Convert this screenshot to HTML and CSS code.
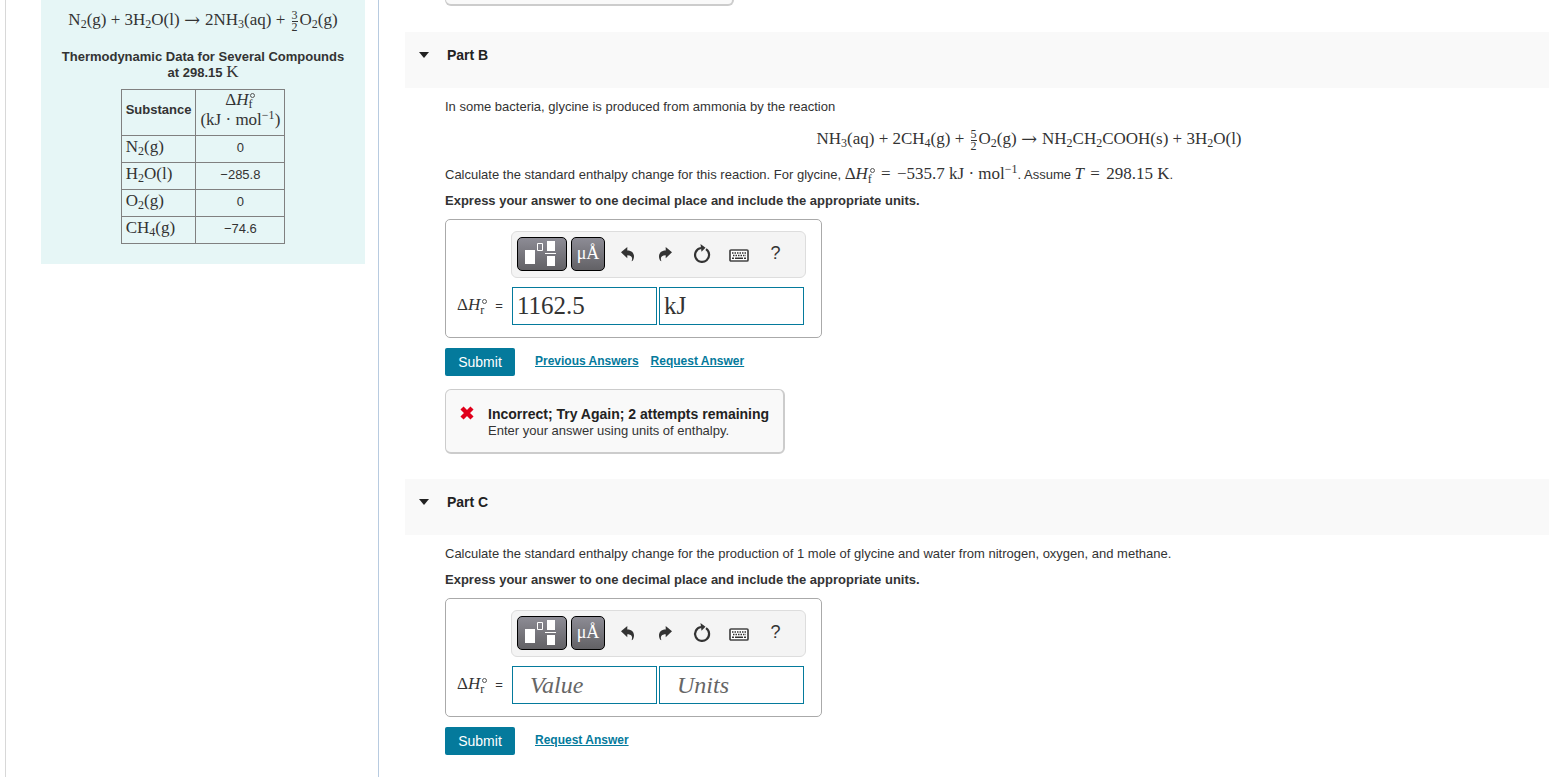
FILE: index.html
```html
<!DOCTYPE html>
<html lang="en">
<head>
<meta charset="utf-8">
<title>Standard Enthalpy of Reaction</title>
<link rel="stylesheet" href="styles.css">
</head>
<body>
<svg class="symbols" aria-hidden="true">
  <symbol id="i-template" viewBox="0 0 34 26">
    <path fill="#fff" d="M0 9h10v14H0zM22 0h8v10h-8zM22 15h8v10h-8zM20 12h11v1H20z"/>
    <path fill="none" stroke="#fff" d="M12.500 2.500h5v7h-5z"/>
  </symbol>
  <symbol id="i-undo" viewBox="0 0 16 16">
    <path fill="#333" d="M1 6.300 7.300 1v3.400c4.500 0 6.700 2.600 6.700 6 0 1.900-.6 3.400-1.700 4.600-.4.300-.7.100-.5-.4 1-3.300-.4-5.200-4.500-5.300v3z"/>
  </symbol>
  <symbol id="i-redo" viewBox="0 0 16 16">
    <path fill="#333" d="M15 6.300 8.700 1v3.400C4.200 4.400 2 7 2 10.400c0 1.900.6 3.400 1.700 4.600.4.300.7.100.5-.4-1-3.300.4-5.200 4.500-5.300v3z"/>
  </symbol>
  <symbol id="i-reset" viewBox="0 0 18 20">
    <path fill="none" stroke="#333" stroke-width="2.200" d="M13 5.100A7 7 0 1 1 8 4"/>
    <path fill="#333" d="M7.500 0l5 3.800-4 4z"/>
  </symbol>
  <symbol id="i-keyboard" viewBox="0 0 20 14">
    <rect x="1" y="1" width="18" height="11" rx="1" fill="#fff" stroke="#444" stroke-width="1.700"/>
    <path stroke="#333" stroke-width="1.500" stroke-dasharray="1.500 1" d="M3 4h14M4 6.500h13"/>
    <path stroke="#333" stroke-width="1.500" d="M3 9.300h2M6 9.300h8M15 9.300h2"/>
  </symbol>
  <symbol id="i-cross" viewBox="0 0 14 14">
    <path stroke="#e0001b" stroke-width="4.400" d="M2 2l10 10M12 2 2 12"/>
  </symbol>
</svg>

<div class="page">
  <aside class="sidebar">
    <section class="intro">
      <div class="math intro-equation">N<sub>2</sub>(g) + 3H<sub>2</sub>O(l) <span class="arrow">→</span> 2NH<sub>3</sub>(aq) + <span class="frac"><span>3</span><span>2</span></span>O<sub>2</sub>(g)</div>
      <h2 class="table-title">Thermodynamic Data for Several Compounds<br>at 298.15 <span class="math">K</span></h2>
      <table class="data">
        <thead>
          <tr><th scope="col">Substance</th><th scope="col" class="math">Δ<i>H</i><span class="scripts"><span class="degree"></span><span>f</span></span><br>(kJ · mol<sup>−1</sup>)</th></tr>
        </thead>
        <tbody>
          <tr><th scope="row" class="math">N<sub>2</sub>(g)</th><td>0</td></tr>
          <tr><th scope="row" class="math">H<sub>2</sub>O(l)</th><td>−285.8</td></tr>
          <tr><th scope="row" class="math">O<sub>2</sub>(g)</th><td>0</td></tr>
          <tr><th scope="row" class="math">CH<sub>4</sub>(g)</th><td>−74.6</td></tr>
        </tbody>
      </table>
    </section>
  </aside>

  <main class="main">
    <div class="feedback feedback-tail"></div>

    <section class="part">
      <header class="part-header"><button class="toggle" type="button" aria-label="Collapse Part B"></button><h2>Part B</h2></header>
      <div class="part-body">
        <p>In some bacteria, glycine is produced from ammonia by the reaction</p>
        <div class="math equation">NH<sub>3</sub>(aq) + 2CH<sub>4</sub>(g) + <span class="frac"><span>5</span><span>2</span></span>O<sub>2</sub>(g) <span class="arrow">→</span> NH<sub>2</sub>CH<sub>2</sub>COOH(s) + 3H<sub>2</sub>O(l)</div>
        <p>Calculate the standard enthalpy change for this reaction. For glycine, <span class="math">Δ<i>H</i><span class="scripts"><span class="degree"></span><span>f</span></span> <span class="rel">=</span> −535.7 kJ · mol<sup>−1</sup></span>. Assume <span class="math"><i>T</i> <span class="rel">=</span> 298.15 K</span>.</p>
        <p class="instruction">Express your answer to one decimal place and include the appropriate units.</p>
        <form class="answer">
          <div class="toolbar">
            <button class="tool dark wide" type="button" aria-label="Templates"><svg width="34" height="26"><use href="#i-template"/></svg></button>
            <button class="tool dark" type="button" aria-label="Symbols">μÅ</button>
            <button class="tool" type="button" aria-label="Undo"><svg width="16" height="16"><use href="#i-undo"/></svg></button>
            <button class="tool" type="button" aria-label="Redo"><svg width="16" height="16"><use href="#i-redo"/></svg></button>
            <button class="tool" type="button" aria-label="Reset"><svg width="18" height="20"><use href="#i-reset"/></svg></button>
            <button class="tool low" type="button" aria-label="Keyboard shortcuts"><svg width="20" height="14"><use href="#i-keyboard"/></svg></button>
            <button class="tool" type="button" aria-label="Help">?</button>
          </div>
          <label class="answer-label" for="b-value"><span class="math">Δ<i>H</i><span class="scripts"><span class="degree"></span><span>r</span></span></span> =</label>
          <div class="fields">
            <input id="b-value" type="text" value="1162.5">
            <input type="text" value="kJ" aria-label="Units">
          </div>
        </form>
        <div class="actions"><button class="submit" type="submit">Submit</button><a href="#">Previous Answers</a><a href="#">Request Answer</a></div>
        <div class="feedback" role="status">
          <svg width="14" height="14"><use href="#i-cross"/></svg>
          <div><strong>Incorrect; Try Again; 2 attempts remaining</strong><div>Enter your answer using units of enthalpy.</div></div>
        </div>
      </div>
    </section>

    <section class="part">
      <header class="part-header"><button class="toggle" type="button" aria-label="Collapse Part C"></button><h2>Part C</h2></header>
      <div class="part-body">
        <p>Calculate the standard enthalpy change for the production of 1 mole of glycine and water from nitrogen, oxygen, and methane.</p>
        <p class="instruction">Express your answer to one decimal place and include the appropriate units.</p>
        <form class="answer">
          <div class="toolbar">
            <button class="tool dark wide" type="button" aria-label="Templates"><svg width="34" height="26"><use href="#i-template"/></svg></button>
            <button class="tool dark" type="button" aria-label="Symbols">μÅ</button>
            <button class="tool" type="button" aria-label="Undo"><svg width="16" height="16"><use href="#i-undo"/></svg></button>
            <button class="tool" type="button" aria-label="Redo"><svg width="16" height="16"><use href="#i-redo"/></svg></button>
            <button class="tool" type="button" aria-label="Reset"><svg width="18" height="20"><use href="#i-reset"/></svg></button>
            <button class="tool low" type="button" aria-label="Keyboard shortcuts"><svg width="20" height="14"><use href="#i-keyboard"/></svg></button>
            <button class="tool" type="button" aria-label="Help">?</button>
          </div>
          <label class="answer-label" for="c-value"><span class="math">Δ<i>H</i><span class="scripts"><span class="degree"></span><span>r</span></span></span> =</label>
          <div class="fields">
            <input id="c-value" type="text" placeholder="Value">
            <input type="text" placeholder="Units" aria-label="Units">
          </div>
        </form>
        <div class="actions"><button class="submit" type="submit">Submit</button><a href="#">Request Answer</a></div>
      </div>
    </section>
  </main>
</div>
</body>
</html>
```

FILE: styles.css
```css
* { box-sizing: border-box; }
body {
  margin: 0;
  background: #fff;
  color: #333;
  font: 13px/16px "Liberation Sans", Arial, sans-serif;
}
h2, p { margin: 0; }
button { font-family: inherit; cursor: pointer; }
.symbols { display: none; }

.page { display: flex; min-height: 100vh; }
.sidebar {
  flex: none;
  width: 374px;
  margin-left: 5px;
  padding: 0 13px 0 35px;
  border-left: 1px solid #d8d8d8;
  border-right: 1px solid #b8cbe0;
}
.main { flex: 1; min-width: 0; padding-left: 26px; }

/* Formulas */
.math {
  font-family: "Liberation Serif", "Times New Roman", serif;
  font-size: 17px;
  font-weight: normal;
  white-space: nowrap;
}
.math sub, .math sup { font-size: 12px; line-height: 0; }
.math sub { vertical-align: -3px; }
.math sup { vertical-align: 6px; }
.arrow { font-family: "DejaVu Math TeX Gyre", "DejaVu Sans", sans-serif; font-size: 17px; line-height: 0; }
.rel { padding: 0 2px; }
.frac, .scripts {
  display: inline-flex;
  flex-direction: column;
  vertical-align: middle;
  font-size: 12px;
  line-height: 11px;
  text-align: center;
}
.frac { margin: 0 2px; }
.frac span:first-child { border-bottom: 1px solid #333; }
.scripts { gap: 1px; padding-top: 2px; text-align: left; }
.degree {
  width: 5px;
  height: 5px;
  margin-left: 2px;
  border: 1px solid #555;
  border-radius: 50%;
}

/* Introduction panel */
.intro { padding: 8px 16px 20px; background: #e6f6f6; text-align: center; }
.intro-equation { line-height: 24px; }
.table-title { margin-top: 16px; font-size: 13px; line-height: 16px; }
.table-title .math { line-height: 0; }
.data { margin: 8px auto 0; border-collapse: collapse; }
.data th, .data td { height: 27px; padding: 0 4px 1px; border: 1px solid #808080; }
.data thead th { height: 46px; padding-bottom: 4px; line-height: 20px; }
.data tbody th { padding-bottom: 3px; text-align: left; }

/* Question parts */
.part-header { display: flex; gap: 18px; height: 56px; padding: 14px 14px 0; background: #f9f9f9; }
.part-header h2 { color: #222; font-size: 14px; line-height: 18px; }
.toggle {
  width: 10px;
  height: 6px;
  margin-top: 6px;
  padding: 0;
  border: 0;
  background: #222;
  clip-path: polygon(0 0, 100% 0, 50% 100%);
}
.part-body { padding: 9px 0 25px 40px; }
.part-body p { margin-bottom: 6px; line-height: 20px; }
.part-body p .math { line-height: 1; }
.part-body .instruction { margin-bottom: 8px; font-weight: bold; }
.equation { margin: 0 0 10px; padding-left: 64px; line-height: 32px; text-align: center; }

/* Answer editor */
.answer {
  display: grid;
  grid-template-columns: 54px 295px;
  gap: 9px 0;
  width: 377px;
  padding: 11px 11px 12px;
  border: 1px solid #aaa;
  border-radius: 5px;
}
.toolbar {
  grid-column: 2;
  display: flex;
  align-items: center;
  height: 47px;
  padding: 0 5px 2px;
  background: #f4f4f4;
  border: 1px solid #ddd;
  border-radius: 6px;
}
.tool {
  display: flex;
  flex: none;
  align-items: center;
  justify-content: center;
  width: 37px;
  height: 34px;
  padding: 0;
  background: none;
  border: 0;
  color: #333;
  font-size: 18px;
}
.tool.low { padding-top: 4px; }
.tool.dark {
  width: 34px;
  margin-right: 4px;
  background: linear-gradient(#8d8c95, #626165);
  border: 1px solid #000;
  border-radius: 5px;
  color: #fff;
  font: 18px "Liberation Serif", serif;
}
.tool.wide { width: 50px; }
.answer-label { display: flex; align-items: center; gap: 8px; white-space: nowrap; }
.fields { display: flex; gap: 2px; padding-left: 1px; }
.fields input {
  width: 145px;
  height: 38px;
  padding: 0 4px;
  background: #fff;
  border: 1px solid #047a9c;
  border-radius: 0;
  color: #333;
  font: 25px "Liberation Serif", "Times New Roman", serif;
}
.fields input::placeholder { padding-left: 13px; color: #666; font-size: 24px; font-style: italic; }

.actions { display: flex; gap: 12px; margin-top: 10px; }
.actions a { color: #047a9c; font-size: 12px; font-weight: bold; line-height: 26px; }
.submit {
  width: 70px;
  height: 28px;
  margin-right: 8px;
  padding: 0;
  background: #047a9c;
  border: 0;
  border-radius: 2px;
  color: #fff;
  font-size: 14px;
}

.feedback {
  display: flex;
  gap: 14px;
  width: 340px;
  margin-top: 13px;
  padding: 16px 14px 13px;
  background: #f9f9f9;
  border: 1px solid #ccc;
  border-width: 1px 2px 2px 1px;
  border-radius: 6px;
}
.feedback svg { flex: none; }
.feedback strong { color: #222; font-size: 14px; white-space: nowrap; }
.feedback-tail { width: 289px; height: 6px; margin: 0 0 26px 40px; padding: 0; border-top: 0; border-radius: 0 0 6px 6px; }
```
